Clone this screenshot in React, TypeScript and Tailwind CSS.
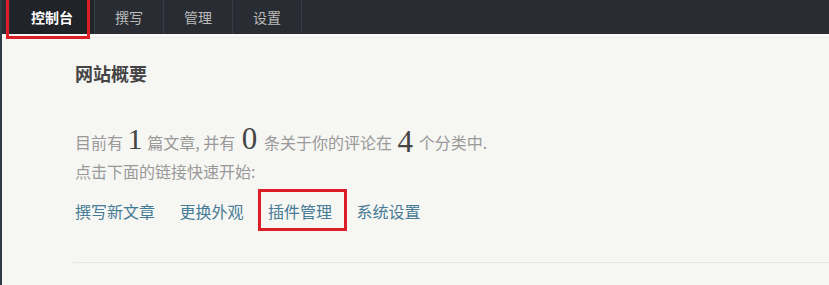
import React from "react";

const cjk = { fontFamily: '"Noto Sans CJK SC", "Noto Sans", sans-serif' };
const serif = { fontFamily: '"Liberation Serif", serif' };

export default function App() {
  const tabs = ["撰写", "管理", "设置"];
  return (
    <div className="relative w-[829px] h-[285px] overflow-hidden bg-[#F6F6F3]" style={cjk}>
      {/* nav */}
      <div className="flex h-[34px] bg-[#292D33] pl-[10px]">
        <div className="relative flex items-center justify-center w-[85px] h-full bg-[#202328] border-r border-[#383D45] text-[14px] font-bold text-white">
          控制台
          <div className="absolute -top-[3px] -left-[4px] right-[4px] -bottom-[5px] border-[3px] border-[#dc1f26]" />
        </div>
        {tabs.map((t) => (
          <div
            key={t}
            className="flex items-center h-full px-[20px] border-r border-[#383D45] text-[14px] text-[#BBBBBB]"
          >
            {t}
          </div>
        ))}
      </div>
      <div className="h-[4px] border-b border-[#ebebe8] bg-[#f8f8f6]" />

      {/* main */}
      <div className="pl-[75px]">
        <h3 className="mt-[23px] h-[24px] leading-[24px] text-[18px] font-bold text-[#444]">网站概要</h3>
        <div className="mt-[38px] h-[32px] leading-[32px] text-[16px] text-[#999] whitespace-nowrap">
          目前有{" "}
          <em className="not-italic text-[30px] leading-none text-[#444] px-[1px]" style={serif}>1</em>{" "}
          篇文章, 并有{" "}
          <em className="not-italic text-[31px] leading-none text-[#444] px-[3px]" style={serif}>0</em>{" "}
          条关于你的评论在{" "}
          <em className="not-italic text-[31px] leading-none text-[#444] px-[2px] relative top-[3px]" style={serif}>4</em>{" "}
          个分类中.
        </div>
        <div className="h-[32px] leading-[32px] text-[16px] text-[#999]">点击下面的链接快速开始:</div>
        <div className="mt-[12px] flex gap-[24.5px] h-[24px] leading-[24px] text-[16px] text-[#467B96]">
          <a>撰写新文章</a>
          <a>更换外观</a>
          <span className="relative">
            <a>插件管理</a>
            <span className="absolute -top-[10px] -left-[10px] -right-[15px] -bottom-[8px] border-[3px] border-[#dc1f26]" />
          </span>
          <a>系统设置</a>
        </div>
      </div>
      <div className="ml-[73px] mt-[39px] border-t border-[#e6e6e3]" />

      {/* left dark edge */}
      <div className="absolute left-0 top-0 bottom-0 w-[2px] bg-[#2f3b45]" />
    </div>
  );
}
